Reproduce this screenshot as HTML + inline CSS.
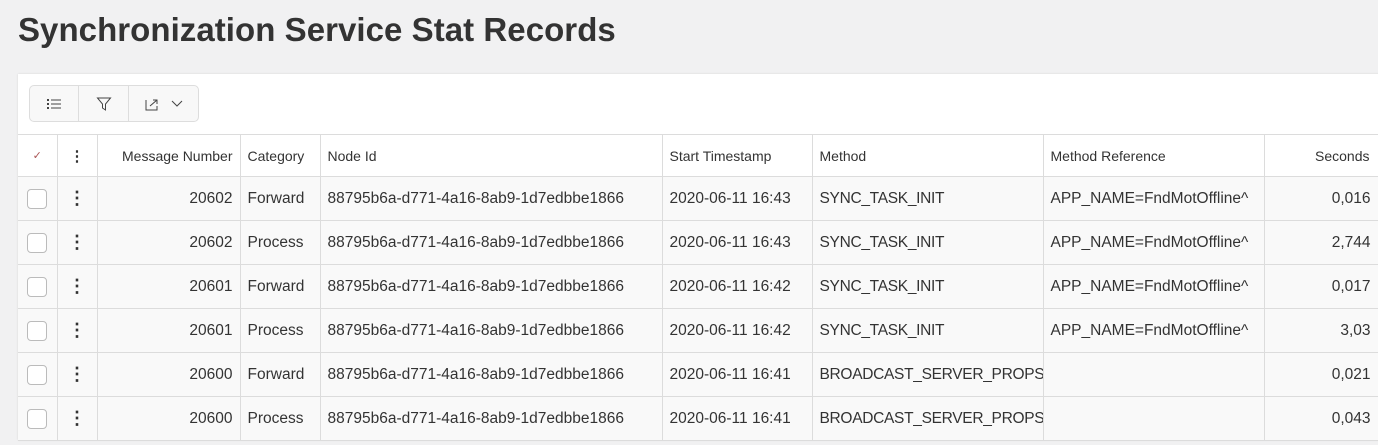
<!DOCTYPE html>
<html><head><style>
body{margin:0;width:1378px;height:445px;background:#f1f1f2;font-family:"Liberation Sans",sans-serif;overflow:hidden;position:relative;color:#333}
h1{position:absolute;left:18px;top:11px;margin:0;font-size:33px;font-weight:bold;color:#333;letter-spacing:0.05px}
.card{position:absolute;left:18px;top:74px;width:1370px;height:366px;background:#fff;box-shadow:0 0 2px rgba(0,0,0,.12)}
.tb{position:absolute;left:11px;top:11px;height:35px;width:168px;border:1px solid #ddd;border-radius:5px;background:#f8f8f8;display:flex}
.tb div{border-right:1px solid #ddd;display:flex;align-items:center;justify-content:center}
table{position:absolute;left:0;top:60px;border-collapse:collapse;table-layout:fixed;width:1360px}
td,th{border:1px solid #dcdcdc;padding:0 7px;white-space:nowrap;overflow:hidden;font-size:15.5px;height:43px;text-overflow:clip}
th{font-weight:normal;font-size:14px;height:41px;text-align:left;background:#fff}
td{background:#f9f9f9}
.r{text-align:right}
.m{letter-spacing:-0.3px}
.cb{width:18px;height:18px;border:1px solid #bbb;border-radius:4px;background:#fff;display:block;margin-left:2px}
.dots{font-weight:bold;font-size:18px;text-align:center;padding:0}
tr td:first-child,tr th:first-child{border-left:none}
</style></head><body>
<h1>Synchronization Service Stat Records</h1>
<div class="card">
<div class="tb">
<div style="width:48px"><svg width="16" height="14"><g fill="#444"><rect x="1" y="2" width="2" height="2"/><rect x="1" y="6" width="2" height="2"/><rect x="1" y="10" width="2" height="2"/><rect x="5" y="2.5" width="10" height="1"/><rect x="5" y="6.5" width="10" height="1"/><rect x="5" y="10.5" width="10" height="1"/></g></svg></div>
<div style="width:49px"><svg width="16" height="16"><path d="M1.5 2h13l-5 6v6l-3-2V8z" fill="none" stroke="#444"/></svg></div>
<div style="width:69px;border:none;gap:12px"><svg width="14" height="14"><path d="M1 3v10h11V9M5 9l7-6M8 3h4v4" fill="none" stroke="#444"/></svg><svg width="12" height="8"><path d="M1 1l5 5 5-5" fill="none" stroke="#444"/></svg></div>
</div>
<table>
<colgroup><col style="width:39px"><col style="width:40px"><col style="width:143px"><col style="width:80px"><col style="width:342px"><col style="width:150px"><col style="width:231px"><col style="width:221px"><col style="width:114px"></colgroup>
<tr><th style="text-align:center;color:#a55;font-size:11px;padding:0">✓</th><th class="dots" style="font-size:15px">⋮</th><th class="r">Message Number</th><th>Category</th><th>Node Id</th><th>Start Timestamp</th><th>Method</th><th>Method Reference</th><th class="r" style="padding-right:8px">Seconds</th></tr>
<tr><td><span class="cb"></span></td><td class="dots">⋮</td><td class="r">20602</td><td>Forward</td><td>88795b6a-d771-4a16-8ab9-1d7edbbe1866</td><td>2020-06-11 16:43</td><td class="m">SYNC_TASK_INIT</td><td>APP_NAME=FndMotOffline^</td><td class="r">0,016</td></tr>
<tr><td><span class="cb"></span></td><td class="dots">⋮</td><td class="r">20602</td><td>Process</td><td>88795b6a-d771-4a16-8ab9-1d7edbbe1866</td><td>2020-06-11 16:43</td><td class="m">SYNC_TASK_INIT</td><td>APP_NAME=FndMotOffline^</td><td class="r">2,744</td></tr>
<tr><td><span class="cb"></span></td><td class="dots">⋮</td><td class="r">20601</td><td>Forward</td><td>88795b6a-d771-4a16-8ab9-1d7edbbe1866</td><td>2020-06-11 16:42</td><td class="m">SYNC_TASK_INIT</td><td>APP_NAME=FndMotOffline^</td><td class="r">0,017</td></tr>
<tr><td><span class="cb"></span></td><td class="dots">⋮</td><td class="r">20601</td><td>Process</td><td>88795b6a-d771-4a16-8ab9-1d7edbbe1866</td><td>2020-06-11 16:42</td><td class="m">SYNC_TASK_INIT</td><td>APP_NAME=FndMotOffline^</td><td class="r">3,03</td></tr>
<tr><td><span class="cb"></span></td><td class="dots">⋮</td><td class="r">20600</td><td>Forward</td><td>88795b6a-d771-4a16-8ab9-1d7edbbe1866</td><td>2020-06-11 16:41</td><td class="m">BROADCAST_SERVER_PROPS</td><td></td><td class="r">0,021</td></tr>
<tr><td><span class="cb"></span></td><td class="dots">⋮</td><td class="r">20600</td><td>Process</td><td>88795b6a-d771-4a16-8ab9-1d7edbbe1866</td><td>2020-06-11 16:41</td><td class="m">BROADCAST_SERVER_PROPS</td><td></td><td class="r">0,043</td></tr>
</table>
</div>
</body></html>
